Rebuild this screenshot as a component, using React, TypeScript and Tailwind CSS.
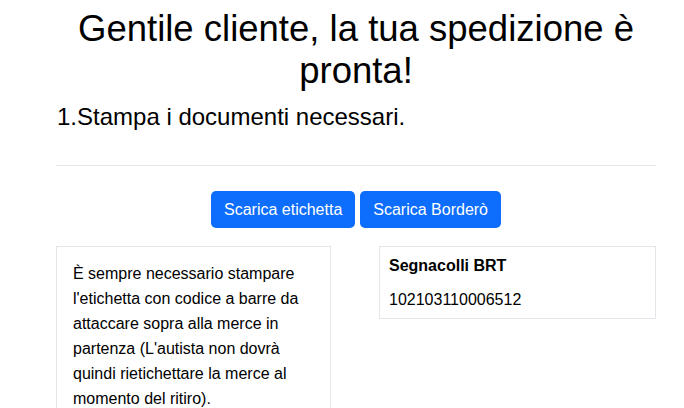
export default function App() {
  return (
    <div className="min-h-screen bg-white text-black font-['Liberation_Sans',Arial,sans-serif]">
      <div className="ml-[56px] w-[600px]">
        <h1 className="pt-[8px] text-center text-[36.5px] leading-[42px]">
          Gentile cliente, la tua spedizione è pronta!
        </h1>

        <h2 className="mt-[10px] pl-[1px] text-[24px] leading-[29px]">1.Stampa i documenti necessari.</h2>

        <hr className="mt-[34px] border-t border-[#e5e5e5]" />

        <div className="mt-[25px] flex justify-center gap-[5px]">
          <button className="h-[37px] px-[13px] rounded-[5px] bg-[#0d6efd] text-white text-[16px]">
            Scarica etichetta
          </button>
          <button className="h-[37px] px-[13px] rounded-[5px] bg-[#0d6efd] text-white text-[16px]">
            Scarica Borderò
          </button>
        </div>

        <div className="mt-[18px] flex justify-between items-start">
          <div className="w-[275px] border border-[#e3e6ea] px-[16px] pt-[14px] pb-[10px] text-[16px] leading-[25px]">
            È sempre necessario stampare l'etichetta con codice a barre da attaccare sopra alla merce in partenza
            (L'autista non dovrà quindi rietichettare la merce al momento del ritiro).
          </div>
          <div className="w-[277px] border border-[#e3e6ea] px-[9px] pt-[9px] pb-[8px] text-[16px]">
            <div className="font-bold leading-[20px]">Segnacolli BRT</div>
            <div className="mt-[14px] leading-[20px]">102103110006512</div>
          </div>
        </div>
      </div>
    </div>
  )
}
